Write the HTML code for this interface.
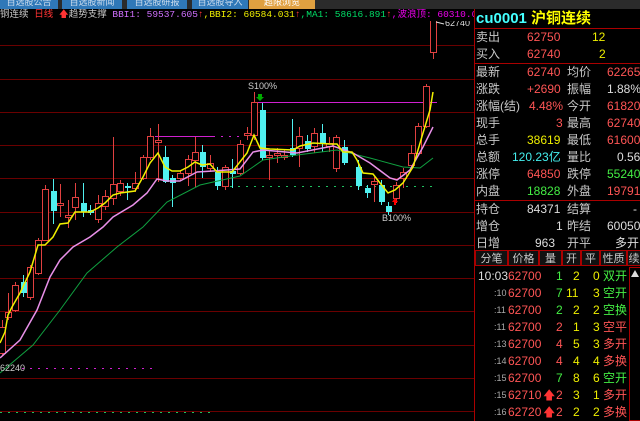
<!DOCTYPE html>
<html><head><meta charset="utf-8"><style>
*{margin:0;padding:0;box-sizing:border-box}
body{width:640px;height:421px;background:#000;overflow:hidden;position:relative;font-family:"Liberation Sans","Noto Sans CJK SC",sans-serif;}
.tabs{position:absolute;left:0;top:0;width:640px;height:9px;background:#2b2b2b}
.tab{position:absolute;top:0;height:9px;background:#2f78b8;color:#cde;font-size:9px;line-height:4px;overflow:hidden;text-align:center}
.hdr{position:absolute;top:9px;left:0;width:474px;overflow:hidden;height:12px;font-size:9.5px;line-height:12px;white-space:nowrap;font-family:"Liberation Mono","Noto Sans CJK SC",monospace}
.p{position:absolute;left:474px;top:9px;width:166px;height:412px;border-left:1px solid #a00;font-size:12px}
.r{position:absolute;left:0;width:166px;height:17px;line-height:17px;white-space:nowrap}
.r span{position:absolute}
.l{color:#c8c8c8}
.sep{position:absolute;left:0;width:166px;height:1px;background:#a00}
.th{position:absolute;top:241px;height:16px;line-height:16px;color:#c8c8c8;font-size:11px;border:1px solid #a00;text-align:center;background:#111}
.tr{position:absolute;left:0;width:155px;height:17px;line-height:17px;font-size:12px}
.tr span{position:absolute}
</style></head><body>
<div class="tabs">
<div class="tab" style="left:0;width:58px">自选股公告</div>
<div class="tab" style="left:62px;width:60px">自选股新闻</div>
<div class="tab" style="left:127px;width:60px">自选股研报</div>
<div class="tab" style="left:192px;width:56px">自选股导入</div>
<div class="tab" style="left:249px;width:66px;background:#e0a040;color:#fff">超限浏览</div>
</div>
<div class="hdr"><span style="color:#ccc">铜连续</span><span style="color:#f33"> 日线 </span><span style="color:#f33">🡅</span><span style="color:#ccc">趋势支撑 </span><span style="color:#d070ff">BBI1: 59537.605</span><span style="color:#f33">↑</span><span style="color:#ee0">,BBI2: 60584.031</span><span style="color:#f33">↑</span><span style="color:#0d6">,MA1: 58616.891</span><span style="color:#f33">↑</span><span style="color:#e0e">,波浪顶: 60310.000,</span><span style="color:#0d6">波浪</span></div>
<svg style="position:absolute;left:0;top:21px" width="474" height="400" viewBox="0 21 474 400">
<g stroke="#6a0000" stroke-width="1">
<line x1="0" y1="45.5" x2="474" y2="45.5"/><line x1="0" y1="79.5" x2="474" y2="79.5"/><line x1="0" y1="112.5" x2="474" y2="112.5"/><line x1="0" y1="145.5" x2="474" y2="145.5"/><line x1="0" y1="178.5" x2="474" y2="178.5"/><line x1="0" y1="212.5" x2="474" y2="212.5"/><line x1="0" y1="245.5" x2="474" y2="245.5"/><line x1="0" y1="278.5" x2="474" y2="278.5"/><line x1="0" y1="311.5" x2="474" y2="311.5"/><line x1="0" y1="345.5" x2="474" y2="345.5"/><line x1="0" y1="378.5" x2="474" y2="378.5"/><line x1="0" y1="411.5" x2="474" y2="411.5"/>
</g>
<line x1="155" y1="136.5" x2="213" y2="136.5" stroke="#d020d0"/>
<line x1="213" y1="136.5" x2="240" y2="136.5" stroke="#d020d0" stroke-dasharray="2,6"/>
<line x1="257" y1="102.5" x2="437" y2="102.5" stroke="#d020d0"/>
<line x1="22" y1="368.5" x2="152" y2="368.5" stroke="#d020d0" stroke-dasharray="2,6"/>
<line x1="0" y1="412.5" x2="212" y2="412.5" stroke="#20c060" stroke-dasharray="2,6"/>
<line x1="230" y1="186.5" x2="436" y2="186.5" stroke="#20c060" stroke-dasharray="2,6"/>
<g id="c" stroke-width="1"></g>
<polyline fill="none" stroke="#10a040" stroke-width="1" points="0,373 33,345 60,310 87,273 117,247 143,227 167,202 200,185 240,176 263,160 297,155 337,150 370,158 403,167 420,168 433,158"/>
<polyline fill="none" stroke="#e890e8" stroke-width="1.5" points="0,358 20,340 37,310 50,277 60,260 73,247 90,237 103,227 113,217 133,205 147,193 157,179 167,181 180,181 197,172 213,171 240,169 253,152 263,150 297,153 333,146 353,153 370,163 390,178 397,180 410,170 423,147 433,127"/>
<polyline fill="none" stroke="#f0f000" stroke-width="1.5" points="0,343 5,332 8,315 12,307 20,293 30,272 38,245 45,245 53,237 60,224 68,223 75,212 90,212 98,208 105,203 113,195 120,193 135,191 143,177 150,163 158,153 165,167 172,171 180,171 188,167 195,162 202,165 210,164 217,172 232,172 247,153 254,135 260,148 270,149 293,150 300,146 313,143 330,144 337,144 343,152 352,152 357,160 363,173 373,174 380,183 388,193 395,190 403,183 413,167 423,133 430,110 433,92"/>
<text x="248" y="89" fill="#ccc" font-size="9" font-family="Liberation Sans">S100%</text>
<text x="382" y="221" fill="#ccc" font-size="9" font-family="Liberation Sans">B100%</text>
<text x="0" y="371" fill="#ccc" font-size="9" font-family="Liberation Sans">62240</text>
<text x="445" y="26" fill="#ddd" font-size="9" font-family="Liberation Sans">62740</text>
<line x1="436" y1="22" x2="444" y2="24" stroke="#ddd"/>
<path d="M258 94h4v3h2l-4 4-4-4h2z" fill="#0a0"/>
<path d="M394 205h2v-3h2l-3-4-3 4h2z" fill="#f00"/>
</svg>
<script>
var d=[[2,327,353,320,356,'r'],[8,312,317,293,320,'r'],[15,285,310,282,312,'r'],[23,282,293,275,297,'c'],[30,267,297,265,300,'r'],[38,240,273,238,275,'r'],[45,189,240,185,240,'r'],[53,191,211,179,224,'c'],[60,203,205,184,217,'r'],[68,215,217,200,228,'r'],[75,197,207,183,220,'r'],[83,203,212,183,217,'c'],[90,210,213,205,215,'c'],[98,203,219,195,223,'r'],[105,196,206,190,210,'r'],[113,184,198,137,205,'r'],[120,183,191,180,196,'r'],[127,186,188,183,200,'c'],[135,183,188,172,192,'r'],[143,157,178,155,180,'r'],[150,136,157,128,160,'r'],[158,140,142,124,182,'r'],[165,157,182,146,183,'c'],[172,178,183,175,207,'c'],[180,173,178,170,180,'r'],[188,159,173,155,186,'r'],[195,152,160,137,187,'r'],[202,152,167,145,178,'c'],[210,163,168,155,172,'r'],[217,172,186,167,190,'c'],[225,167,186,165,190,'r'],[232,171,174,159,188,'c'],[240,144,173,140,175,'r'],[247,133,135,127,140,'r'],[254,102,135,92,140,'r'],[262,110,158,103,160,'c'],[269,155,157,150,180,'r'],[277,153,155,148,163,'r'],[284,155,157,150,160,'r'],[292,148,155,119,157,'c'],[299,136,148,127,167,'r'],[307,141,149,135,152,'c'],[314,133,146,128,153,'r'],[322,133,143,124,152,'c'],[329,143,146,137,152,'r'],[336,137,168,135,172,'r'],[344,147,163,140,165,'c'],[358,167,186,160,190,'c'],[367,188,193,185,198,'c'],[374,181,184,177,202,'r'],[381,185,202,180,205,'c'],[388,206,212,202,215,'c'],[396,185,198,182,203,'r'],[403,172,178,168,188,'r'],[411,153,165,145,168,'r'],[418,126,153,123,155,'r'],[426,86,126,84,128,'r'],[433,20,52,18,59,'r']];
var g=document.getElementById('c'),s='';
d.forEach(function(a){var col=a[5]=='r'?'#e04040':'#50f0f0';var x=a[0];
s+='<line x1="'+(x+0.5)+'" y1="'+a[3]+'" x2="'+(x+0.5)+'" y2="'+a[4]+'" stroke="'+col+'"/>';
if(a[5]=='r')s+='<rect x="'+(x-2.5)+'" y="'+a[1]+'.5" width="6" height="'+Math.max(1,a[2]-a[1])+'" fill="#000" stroke="'+col+'"/>';
else s+='<rect x="'+(x-2)+'" y="'+a[1]+'" width="6" height="'+Math.max(1,a[2]-a[1])+'" fill="'+col+'"/>';});
g.innerHTML=s;
</script>
<div class="p">
<div style="position:absolute;left:1px;top:1px;font-size:15px;font-weight:bold;line-height:18px;white-space:nowrap"><span style="color:#4ff">cu0001</span> <span style="color:#ff0">沪铜连续</span></div>
<div class="sep" style="top:19px"></div>
<div class="r" style="top:20px"><span class="l" style="left:1px">卖出</span><span style="left:52px;color:#f55">62750</span><span style="left:117px;color:#ee0">12</span></div>
<div class="r" style="top:37px"><span class="l" style="left:1px">买入</span><span style="left:52px;color:#f55">62740</span><span style="left:124px;color:#ee0">2</span></div>
<div class="sep" style="top:54px"></div>
<div class="r" style="top:55px"><span class="l" style="left:1px">最新</span><span style="left:52px;color:#f55">62740</span><span class="l" style="left:92px">均价</span><span style="left:132px;color:#f55">62265</span></div>
<div class="r" style="top:72px"><span class="l" style="left:1px">涨跌</span><span style="left:52px;color:#f55">+2690</span><span class="l" style="left:92px">振幅</span><span style="left:132px;color:#ddd">1.88%</span></div>
<div class="r" style="top:89px"><span class="l" style="left:1px">涨幅(结)</span><span style="left:54px;color:#f55">4.48%</span><span class="l" style="left:92px">今开</span><span style="left:132px;color:#f55">61820</span></div>
<div class="r" style="top:106px"><span class="l" style="left:1px">现手</span><span style="left:81px;color:#f55">3</span><span class="l" style="left:92px">最高</span><span style="left:132px;color:#f55">62740</span></div>
<div class="r" style="top:123px"><span class="l" style="left:1px">总手</span><span style="left:52px;color:#ee0">38619</span><span class="l" style="left:92px">最低</span><span style="left:132px;color:#f55">61600</span></div>
<div class="r" style="top:140px"><span class="l" style="left:1px">总额</span><span style="left:37px;color:#4ee">120.23亿</span><span class="l" style="left:92px">量比</span><span style="left:142px;color:#ddd">0.56</span></div>
<div class="r" style="top:157px"><span class="l" style="left:1px">涨停</span><span style="left:52px;color:#f55">64850</span><span class="l" style="left:92px">跌停</span><span style="left:132px;color:#4e4">55240</span></div>
<div class="r" style="top:174px"><span class="l" style="left:1px">内盘</span><span style="left:52px;color:#4e4">18828</span><span class="l" style="left:92px">外盘</span><span style="left:132px;color:#f55">19791</span></div>
<div class="sep" style="top:191px"></div>
<div class="r" style="top:192px"><span class="l" style="left:1px">持仓</span><span style="left:52px;color:#ddd">84371</span><span class="l" style="left:92px">结算</span><span style="left:158px;color:#ddd">-</span></div>
<div class="r" style="top:209px"><span class="l" style="left:1px">增仓</span><span style="left:81px;color:#ddd">1</span><span class="l" style="left:92px">昨结</span><span style="left:132px;color:#ddd">60050</span></div>
<div class="r" style="top:226px"><span class="l" style="left:1px">日增</span><span style="left:60px;color:#ddd">963</span><span class="l" style="left:92px">开平</span><span style="left:140px;color:#ddd">多开</span></div>
<div class="th" style="left:0;width:33px">分笔</div><div class="th" style="left:33px;width:31px">价格</div><div class="th" style="left:64px;width:23px">量</div><div class="th" style="left:87px;width:19px">开</div><div class="th" style="left:106px;width:19px">平</div><div class="th" style="left:125px;width:27px">性质</div><div class="th" style="left:152px;width:14px">续</div>
<div style="position:absolute;left:154px;top:258px;width:12px;height:154px;border:1px solid #a00"><div style="margin:2px auto;width:0;height:0;border-left:4px solid transparent;border-right:4px solid transparent;border-bottom:7px solid #ddd"></div></div>
<div class="tr" style="top:259px"><span style="left:3px;color:#ddd">10:03</span><span style="left:33px;color:#f55">62700</span><span style="left:81px;color:#4e4">1</span><span style="left:98px;color:#ee0">2</span><span style="left:118px;color:#ee0">0</span><span style="left:128px;color:#4e4">双开</span></div>
<div class="tr" style="top:276px"><span style="left:19px;color:#aaa;font-size:9px">:10</span><span style="left:33px;color:#f55">62700</span><span style="left:81px;color:#4e4">7</span><span style="left:91px;color:#ee0">11</span><span style="left:118px;color:#ee0">3</span><span style="left:128px;color:#4e4">空开</span></div>
<div class="tr" style="top:293px"><span style="left:19px;color:#aaa;font-size:9px">:11</span><span style="left:33px;color:#f55">62700</span><span style="left:81px;color:#4e4">2</span><span style="left:98px;color:#ee0">2</span><span style="left:118px;color:#ee0">2</span><span style="left:128px;color:#4e4">空换</span></div>
<div class="tr" style="top:310px"><span style="left:19px;color:#aaa;font-size:9px">:11</span><span style="left:33px;color:#f55">62700</span><span style="left:81px;color:#f55">2</span><span style="left:98px;color:#ee0">1</span><span style="left:118px;color:#ee0">3</span><span style="left:128px;color:#f55">空平</span></div>
<div class="tr" style="top:327px"><span style="left:19px;color:#aaa;font-size:9px">:13</span><span style="left:33px;color:#f55">62700</span><span style="left:81px;color:#f55">4</span><span style="left:98px;color:#ee0">5</span><span style="left:118px;color:#ee0">3</span><span style="left:128px;color:#f55">多开</span></div>
<div class="tr" style="top:344px"><span style="left:19px;color:#aaa;font-size:9px">:14</span><span style="left:33px;color:#f55">62700</span><span style="left:81px;color:#f55">4</span><span style="left:98px;color:#ee0">4</span><span style="left:118px;color:#ee0">4</span><span style="left:128px;color:#f55">多换</span></div>
<div class="tr" style="top:361px"><span style="left:19px;color:#aaa;font-size:9px">:15</span><span style="left:33px;color:#f55">62700</span><span style="left:81px;color:#4e4">7</span><span style="left:98px;color:#ee0">8</span><span style="left:118px;color:#ee0">6</span><span style="left:128px;color:#4e4">空开</span></div>
<div class="tr" style="top:378px"><span style="left:19px;color:#aaa;font-size:9px">:15</span><span style="left:33px;color:#f55">62710</span><span style="left:68px;color:#f33">🡅</span><span style="left:81px;color:#f55">2</span><span style="left:98px;color:#ee0">3</span><span style="left:118px;color:#ee0">1</span><span style="left:128px;color:#f55">多开</span></div>
<div class="tr" style="top:395px"><span style="left:19px;color:#aaa;font-size:9px">:16</span><span style="left:33px;color:#f55">62720</span><span style="left:68px;color:#f33">🡅</span><span style="left:81px;color:#f55">2</span><span style="left:98px;color:#ee0">2</span><span style="left:118px;color:#ee0">2</span><span style="left:128px;color:#f55">多换</span></div>
</div>
</body></html>
